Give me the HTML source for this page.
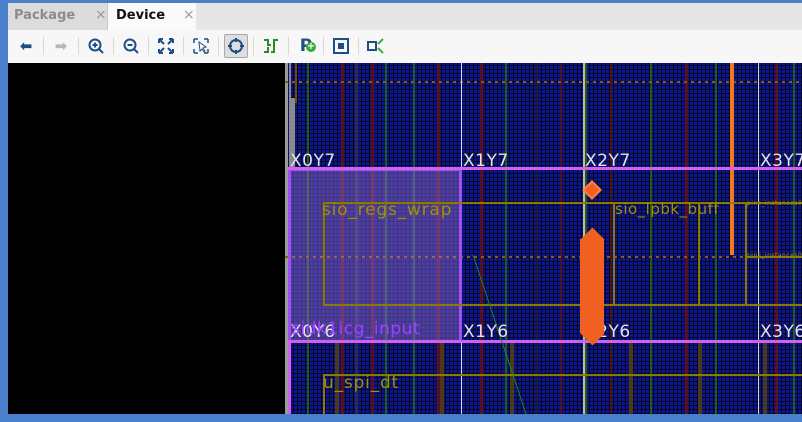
<!DOCTYPE html>
<html><head><meta charset="utf-8"><style>
*{margin:0;padding:0;box-sizing:border-box}
body{width:802px;height:422px;overflow:hidden;background:#4a7fcc;font-family:"DejaVu Sans","Liberation Sans",sans-serif;position:relative}
.a{position:absolute}
#tabs{left:8px;top:3px;width:794px;height:27px;background:#e6e6e6}
#tb{left:8px;top:30px;width:794px;height:33px;background:#f7f7f7}
.ic{position:absolute;top:36px;height:20px;width:20px;font-size:15px;text-align:center;line-height:20px;color:#1d4f86;font-weight:bold}
.sep{position:absolute;top:37px;width:1px;height:18px;background:#d8d8d8}
#blk{left:8px;top:63px;width:277px;height:351px;background:#000}
#cv{left:285px;top:63px;width:517px;height:351px;overflow:hidden;
background:
repeating-linear-gradient(90deg,rgba(0,0,0,.75) 0 1px,transparent 1px 4px),
repeating-linear-gradient(0deg,rgba(0,0,0,.7) 0 1px,transparent 1px 4px),#0c1690}
.v{position:absolute;top:0;height:351px}
.t{position:absolute;color:#e8e0e8;font-size:17px;font-family:"DejaVu Sans",sans-serif;letter-spacing:0.5px}
</style></head><body>
<div class="a" id="tabs">
 <div class="a" style="left:0;top:0;width:100px;height:27px;background:#dcdcdc;border-right:1px solid #c8c8c8"></div>
 <div class="a" style="left:6px;top:5px;font-size:13px;color:#8c8c8c;font-weight:bold">Package</div>
 <div class="a" style="left:87px;top:4px;font-size:14px;color:#999">×</div>
 <div class="a" style="left:100px;top:0;width:88px;height:27px;background:#fafafa"></div>
 <div class="a" style="left:108px;top:5px;font-size:13px;color:#111;font-weight:bold">Device</div>
 <div class="a" style="left:175px;top:4px;font-size:14px;color:#999">×</div>
</div>
<div class="a" id="tb"></div>
<div class="ic" style="left:16px">⬅</div>
<div class="sep" style="left:43px"></div>
<div class="ic" style="left:51px;color:#b8b8b8">➡</div>
<div class="sep" style="left:78px"></div>
<div class="ic" style="left:86px">
<svg width="20" height="20"><circle cx="9" cy="9" r="5.5" fill="none" stroke="#1d4f86" stroke-width="2"/><path d="M13 13l4 4M6.5 9h5M9 6.5v5" stroke="#1d4f86" stroke-width="2"/></svg></div>
<div class="sep" style="left:113px"></div>
<div class="ic" style="left:121px">
<svg width="20" height="20"><circle cx="9" cy="9" r="5.5" fill="none" stroke="#1d4f86" stroke-width="2"/><path d="M13 13l4 4M6.5 9h5" stroke="#1d4f86" stroke-width="2"/></svg></div>
<div class="sep" style="left:148px"></div>
<div class="ic" style="left:156px"><svg width="20" height="20"><path d="M3 3l5 5M17 3l-5 5M3 17l5-5M17 17l-5-5M3 3h4M3 3v4M17 3h-4M17 3v4M3 17h4M3 17v-4M17 17h-4M17 17v-4" stroke="#1d4f86" stroke-width="2"/></svg></div>
<div class="sep" style="left:183px"></div>
<div class="ic" style="left:191px"><svg width="20" height="20"><path d="M3 3h4M3 3v4M17 3h-4M17 3v4M3 17h4M3 17v-4M17 17h-4M17 17v-4" stroke="#1d4f86" stroke-width="1.5" fill="none"/><path d="M8 6l7 5-3 1 2 3-1 1-2-3-2 2z" fill="#fff" stroke="#1d4f86"/></svg></div>
<div class="sep" style="left:218px"></div>
<div class="a" style="left:224px;top:34px;width:24px;height:24px;background:#dedede;border:1px solid #a8a8a8;border-radius:2px"></div>
<div class="ic" style="left:226px"><svg width="20" height="20"><circle cx="10" cy="10" r="6" fill="none" stroke="#1d4f86" stroke-width="2"/><path d="M10 2v4M10 14v4M2 10h4M14 10h4" stroke="#1d4f86" stroke-width="2"/></svg></div>
<div class="sep" style="left:253px"></div>
<div class="ic" style="left:261px"><svg width="20" height="20"><path d="M3 4h4v5h3M17 4h-4v12h-3M3 16h4v-5" stroke="#2a8a2a" stroke-width="2" fill="none"/></svg></div>
<div class="sep" style="left:288px"></div>
<div class="ic" style="left:296px;font-size:17px">P<span class="a" style="left:10px;top:6px;width:10px;height:10px;border-radius:5px;background:#3aa83a;color:#fff;font-size:10px;line-height:10px">+</span></div>
<div class="sep" style="left:323px"></div>
<div class="ic" style="left:331px"><svg width="20" height="20"><rect x="3" y="3" width="14" height="14" fill="none" stroke="#1d4f86" stroke-width="2"/><rect x="7" y="7" width="6" height="6" fill="#1d4f86"/></svg></div>
<div class="sep" style="left:358px"></div>
<div class="ic" style="left:366px"><svg width="22" height="20"><rect x="2" y="6" width="8" height="8" fill="none" stroke="#1d4f86" stroke-width="2"/><path d="M12 8l5-5M12 12l5 5" stroke="#3aa83a" stroke-width="2"/></svg></div>
<div class="a" id="blk"></div>
<div class="a" id="cv">
 <div class="v" style="left:0;width:3px;background:#9a9a9a"></div>
 <div class="v" style="left:4px;width:2px;background:#8a8a8a"></div>
 <div class="v" style="left:5px;top:35px;width:5px;height:70px;background:#8a8a8a"></div>
 <div class="v" style="left:10px;width:2px;background:#6a4a10;height:40px"></div>
 <div class="v" style="left:22px;width:2px;background:#1e5a1e"></div>
 <div class="v" style="left:56px;width:3px;background:#5a0e1e"></div>
 <div class="v" style="left:70px;width:3px;background:#2a2a4a"></div>
 <div class="v" style="left:86px;width:3px;background:#5a0e1e"></div>
 <div class="v" style="left:100px;width:2px;background:#1e5a1e"></div>
 <div class="v" style="left:128px;width:2px;background:#1e5a1e"></div>
 <div class="v" style="left:152px;width:3px;background:#5a0e1e"></div>
 <div class="v" style="left:195px;width:3px;background:#5a0e1e"></div>
 <div class="v" style="left:220px;width:2px;background:#1e5a1e"></div>
 <div class="v" style="left:250px;width:3px;background:#1a1a3a"></div>
 <div class="v" style="left:275px;width:2px;background:#4a1020"></div>
 <div class="v" style="left:300px;width:2px;background:#1e5a1e"></div>
 <div class="v" style="left:325px;width:2px;background:#4a1020"></div>
 <div class="v" style="left:365px;width:2px;background:#1e5a1e"></div>
 <div class="v" style="left:400px;width:3px;background:#5a0e1e"></div>
 <div class="v" style="left:430px;width:2px;background:#1e5a1e"></div>
 <div class="v" style="left:490px;width:3px;background:#5a0e1e"></div>
 <div class="v" style="left:508px;width:2px;background:#1e5a1e"></div>
 <div class="v" style="top:280px;left:50px;width:4px;height:71px;background:#4a3a1a"></div>
 <div class="v" style="top:280px;left:155px;width:4px;height:71px;background:#4a3a1a"></div>
 <div class="v" style="top:280px;left:225px;width:4px;height:71px;background:#4a3a1a"></div>
 <div class="v" style="top:280px;left:344px;width:4px;height:71px;background:#4a3a1a"></div>
 <div class="v" style="top:280px;left:413px;width:4px;height:71px;background:#4a3a1a"></div>
 <div class="v" style="top:280px;left:478px;width:4px;height:71px;background:#4a3a1a"></div>
 <div class="a" style="left:0;top:18px;width:517px;height:2px;background:repeating-linear-gradient(90deg,#8a5a10 0 3px,transparent 3px 7px)"></div>
 <div class="a" style="left:0;top:193px;width:517px;height:2px;background:repeating-linear-gradient(90deg,#8a5a10 0 3px,transparent 3px 7px)"></div>
 <div class="v" style="left:176px;width:1px;background:#d8d8d8"></div>
 <div class="v" style="left:298px;width:2px;background:#c8b8a0"></div>
 <div class="v" style="left:473px;width:1px;background:#d8d8d8"></div>
 <div class="v" style="left:445px;width:4px;height:192px;background:#f07a1a"></div>
 <div class="a" style="left:3px;top:105px;width:174px;height:173px;background:rgba(150,110,210,.45);border:3px solid #a050f0;border-bottom:none"></div>
 <div class="a" style="left:3px;top:104px;width:514px;height:3px;background:#d060f0"></div>
 <div class="a" style="left:3px;top:277px;width:514px;height:3px;background:#d060f0"></div>
 <div class="a" style="left:3px;top:277px;width:3px;height:74px;background:#d060f0"></div>
 <div class="a" style="left:38px;top:139px;width:490px;height:104px;border:2px solid #8a7a00"></div>
 <div class="a" style="left:328px;top:139px;width:87px;height:104px;border:2px solid #8a7a00"></div>
 <div class="a" style="left:460px;top:139px;width:60px;height:104px;border-left:2px solid #8a7a00"></div>
 <div class="a" style="left:460px;top:193px;width:60px;height:2px;background:#8a7a00"></div>
 <div class="a" style="left:38px;top:311px;width:490px;height:60px;border:2px solid #8a7a00"></div>
 <svg class="a" style="left:0;top:0" width="517" height="351"><path d="M188 192L241 351" stroke="#1a8a1a" stroke-width="1"/></svg>
 <div class="t" style="left:5px;top:88px">X0Y7</div>
 <div class="t" style="left:178px;top:88px;color:#e8e8c8">X1Y7</div>
 <div class="t" style="left:300px;top:88px">X2Y7</div>
 <div class="t" style="left:475px;top:88px">X3Y7</div>
 <div class="t" style="left:5px;top:259px">X0Y6</div>
 <div class="t" style="left:178px;top:259px">X1Y6</div>
 <div class="t" style="left:300px;top:259px">X2Y6</div>
 <div class="t" style="left:475px;top:259px">X3Y6</div>
 <div class="t" style="left:37px;top:137px;color:#a09000;letter-spacing:0.8px">sio_regs_wrap</div>
 <div class="t" style="left:330px;top:137px;color:#a09000;font-size:15px">sio_lpbk_buff</div>
 <div class="t" style="left:6px;top:256px;color:#a040ff">sidk1icg_input</div>
 <div class="t" style="left:38px;top:310px;color:#a09000;letter-spacing:0.8px">u_spi_dt</div>
 <div class="t" style="left:462px;top:137px;color:#a09000;font-size:6px">pins_instances01</div>
 <div class="t" style="left:462px;top:189px;color:#a09000;font-size:6px">pins_instances01</div>
 <div class="a" style="left:300px;top:120px;width:14px;height:14px;background:#f06020;transform:rotate(45deg);border:2px solid #ff8040"></div>
 <div class="a" style="left:295px;top:176px;width:24px;height:94px;background:#f06020"></div>
 <div class="a" style="left:299px;top:168px;width:17px;height:17px;background:#f06020;transform:rotate(45deg)"></div>
 <div class="a" style="left:299px;top:262px;width:17px;height:17px;background:#f06020;transform:rotate(45deg)"></div>
</div>
</body></html>
